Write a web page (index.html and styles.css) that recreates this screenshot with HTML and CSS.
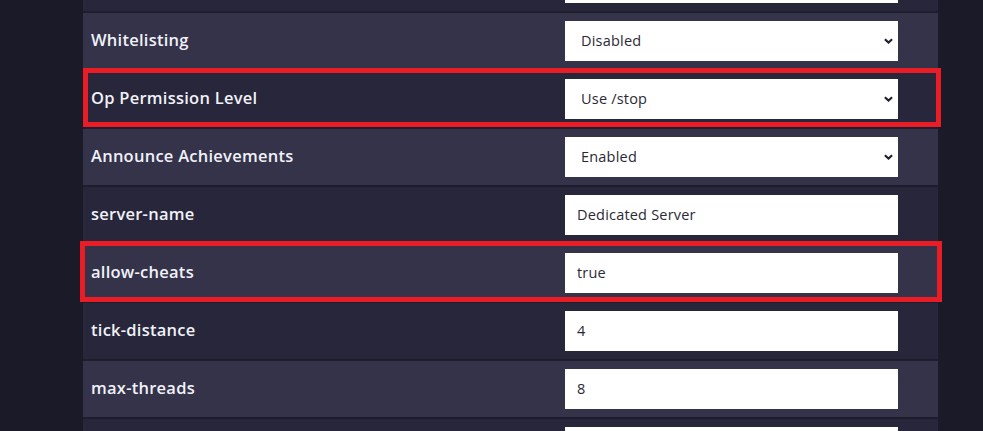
FILE: index.html
```html
<!DOCTYPE html>
<html lang="en">
<head>
<meta charset="utf-8">
<title>Server Properties</title>
<link rel="stylesheet" href="styles.css">
</head>
<body>
<div class="page">
  <div class="table">
    <div class="row dark">
      <span class="label"></span>
      <div class="field"><div class="control blank"></div></div>
    </div>
    <div class="row light">
      <label class="label">Whitelisting</label>
      <div class="field select-wrap">
        <select class="control select"><option>Disabled</option><option>Enabled</option></select>
        <svg class="chev" viewBox="0 0 10 6" width="9" height="6"><path d="M1 1l4 3.6L9 1" fill="none" stroke="#1f1e2c" stroke-width="2.4"/></svg>
      </div>
    </div>
    <div class="row dark mark-a">
      <label class="label">Op Permission Level</label>
      <div class="field select-wrap">
        <select class="control select"><option>Use /stop</option></select>
        <svg class="chev" viewBox="0 0 10 6" width="9" height="6"><path d="M1 1l4 3.6L9 1" fill="none" stroke="#1f1e2c" stroke-width="2.4"/></svg>
      </div>
    </div>
    <div class="row light">
      <label class="label">Announce Achievements</label>
      <div class="field select-wrap">
        <select class="control select"><option>Enabled</option><option>Disabled</option></select>
        <svg class="chev" viewBox="0 0 10 6" width="9" height="6"><path d="M1 1l4 3.6L9 1" fill="none" stroke="#1f1e2c" stroke-width="2.4"/></svg>
      </div>
    </div>
    <div class="row dark">
      <label class="label">server-name</label>
      <div class="field"><input class="control input" type="text" value="Dedicated Server"></div>
    </div>
    <div class="row light mark-b">
      <label class="label">allow-cheats</label>
      <div class="field"><input class="control input" type="text" value="true"></div>
    </div>
    <div class="row dark">
      <label class="label">tick-distance</label>
      <div class="field"><input class="control input" type="text" value="4"></div>
    </div>
    <div class="row light">
      <label class="label">max-threads</label>
      <div class="field"><input class="control input" type="text" value="8"></div>
    </div>
    <div class="row dark">
      <span class="label"></span>
      <div class="field"><div class="control blank"></div></div>
    </div>
  </div>
</div>
</body>
</html>
```

FILE: styles.css
```css
html, body {
  margin: 0;
  padding: 0;
  background: #1b1a29;
  height: 100%;
  overflow: hidden;
}

.page {
  padding-left: 83px;
  width: 855px;
}

.table {
  margin-top: -45px;
  display: flex;
  flex-direction: column;
}

.row {
  position: relative;
  display: grid;
  grid-template-columns: 1fr 333px;
  align-items: center;
  height: 56px;
  padding: 0 40px 0 8px;
  border-bottom: 2px solid #1e1d2e;
}

.row.light { background: #34334a; }
.row.dark { background: #27263a; }

.label {
  font-family: "Open Sans", "Liberation Sans", sans-serif;
  font-size: 16.5px;
  font-weight: 600;
  line-height: 20px;
  padding-bottom: 3px;
  color: #f1f1f8;
  letter-spacing: 0.25px;
}

.field {
  position: relative;
  height: 40px;
}

.control {
  box-sizing: border-box;
  width: 100%;
  height: 40px;
  margin: 0;
  border: none;
  border-radius: 0;
  background: #ffffff;
  font-family: "Open Sans", "Liberation Sans", sans-serif;
  font-size: 14.5px;
  color: #2a2a35;
  outline: none;
  letter-spacing: 0.2px;
}

.input {
  padding: 0 12px 2px;
}

.select {
  -webkit-appearance: none;
  appearance: none;
  padding: 0 24px 2px 16px;
}

.chev {
  position: absolute;
  right: 5px;
  top: 17px;
  pointer-events: none;
}

.mark-a::after,
.mark-b::after {
  content: "";
  position: absolute;
  border: 5px solid #ea1c26;
  pointer-events: none;
}

.mark-a::after {
  left: 0;
  top: -3px;
  right: -3px;
  bottom: 0;
}

.mark-b::after {
  left: -3px;
  top: -4px;
  right: -4px;
  bottom: -1px;
}
```
